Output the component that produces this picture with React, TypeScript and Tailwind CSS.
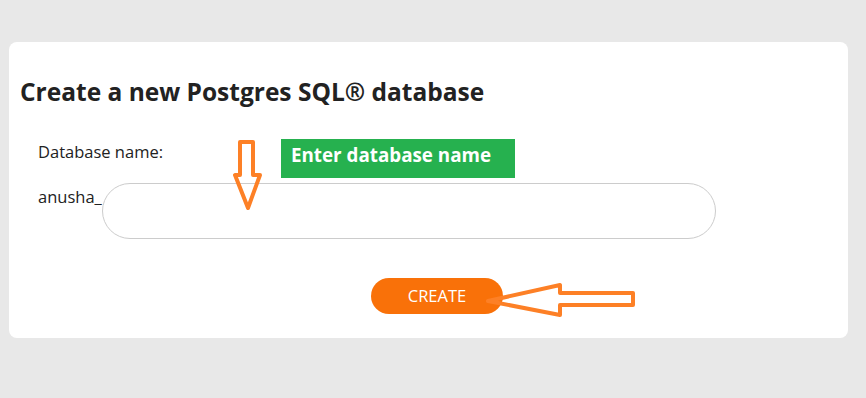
export default function App() {
  return (
    <div className="min-h-[398px] w-full bg-[#e8e8e8] pt-[42px] pl-[9px] pr-[18px] pb-[60px] font-['Open_Sans',sans-serif]">
      <div className="relative h-[296px] rounded-lg bg-white px-[11px] pt-[34px]">
        <h1 className="text-[24.5px] font-bold leading-8 text-[#222]">
          Create a new Postgres SQL® database
        </h1>
        <div className="mt-[32px] pl-[18px]">
          <p className="text-[16.5px] leading-6 text-[#222]">Database name:</p>
          <div className="mt-[19px] flex items-start">
            <span className="mt-[2px] text-[16.5px] leading-6 text-[#222]">anusha_</span>
            <input
              type="text"
              className="h-[56px] w-[614px] rounded-full border border-[#cccccc] bg-white px-5 outline-none"
            />
          </div>
        </div>
        <div className="mt-[39px] pl-[351px]">
          <button className="h-[36px] w-[132px] rounded-full bg-[#f97109] text-[16.5px] text-white">
            CREATE
          </button>
        </div>

        {/* annotations */}
        <div className="absolute left-[272px] top-[97px] flex h-[39px] w-[234px] items-start bg-[#26b14f] pl-[10px] pt-[2px] text-[18.8px] font-bold text-white">
          Enter database name
        </div>
        <svg className="absolute left-[222px] top-[96px]" width="36" height="76" viewBox="0 0 36 76">
          <path
            d="M9 4 H22 V37 H29 L17 70 L4 37 H9 Z"
            fill="none"
            stroke="#fd8026"
            strokeWidth="4"
            strokeLinejoin="round"
          />
        </svg>
        <svg className="absolute left-[471px] top-[238px]" width="160" height="40" viewBox="0 0 160 40">
          <path
            d="M8 21 L80 5 V13 H153 V25 H80 V35 Z"
            fill="none"
            stroke="#fd8026"
            strokeWidth="4"
            strokeLinejoin="round"
          />
        </svg>
      </div>
    </div>
  )
}
